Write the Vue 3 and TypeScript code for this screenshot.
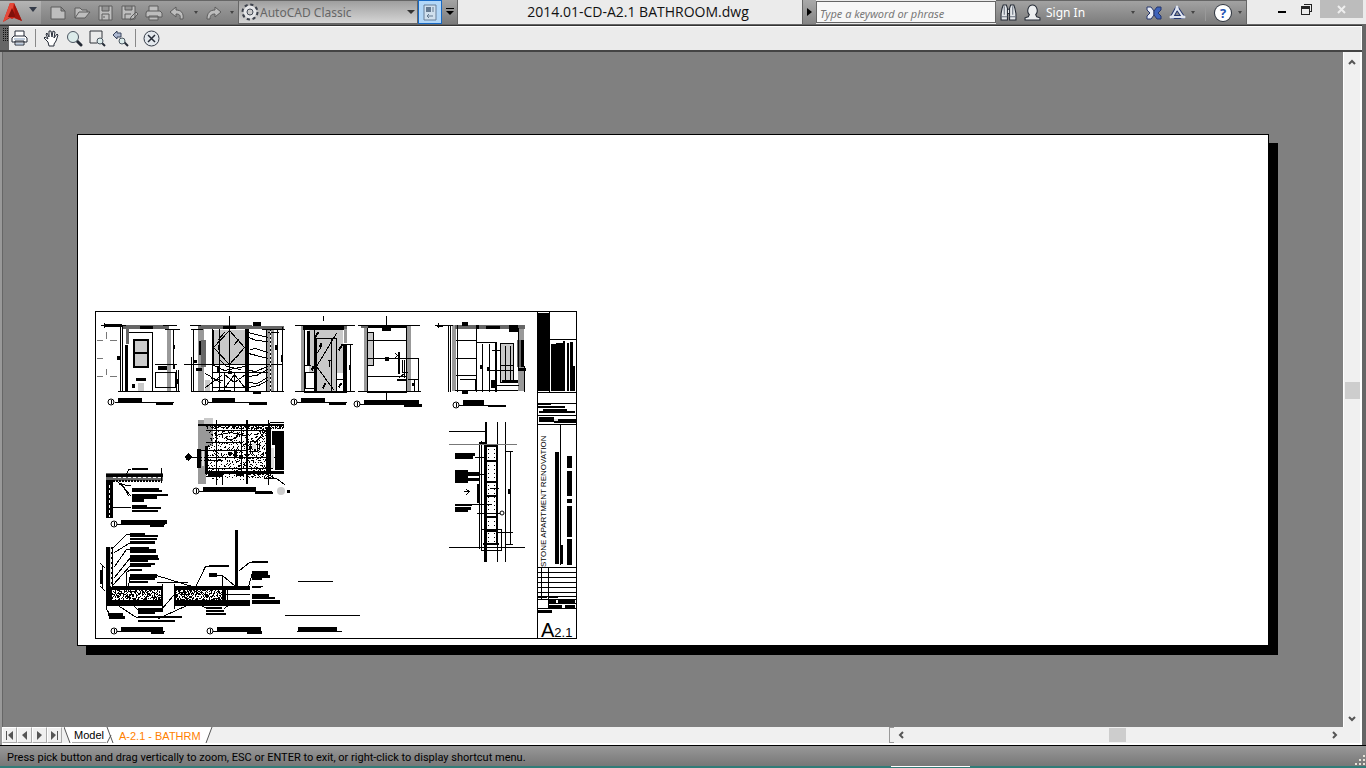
<script setup lang="ts">
import { ref } from 'vue'

type Box = [number, number, number, number]

const workspace = ref('AutoCAD Classic')
const query = ref('')
const activeTab = ref('A-2.1 - BATHRM')

const boxes = (list: Box[]): string =>
  list.map(([x1, y1, x2, y2]) => `M${x1} ${y1}H${x2}V${y2}H${x1}Z`).join('')

const speckle = (x1: number, y1: number, x2: number, y2: number, density: number, seed: number): string => {
  let state = seed
  let d = ''
  for (let y = y1; y < y2; y++) {
    for (let x = x1; x < x2; x++) {
      state = (state * 1103515245 + 12345) % 2147483648
      if (state / 2147483648 < density) d += `M${x} ${y}h1v1h-1z`
    }
  }
  return d
}

const darkGray = boxes([
  [122, 325, 169, 329], [126, 329, 129, 344], [198, 325, 252, 329], [252, 326, 284, 329],
  [201, 340, 206, 367], [303, 325, 347, 329], [361, 326, 368, 328], [455, 325, 525, 329],
  [517, 340, 522, 367], [106, 473, 163, 481],
])
const midGray = boxes([
  [167, 329, 171, 391], [198, 329, 204, 391], [267, 329, 274, 391], [301, 326, 304, 391],
  [344, 326, 347, 343], [364, 326, 367, 391], [407, 326, 411, 391], [452, 325, 456, 391],
  [518, 329, 524, 391], [198, 420, 206, 484], [204, 424, 213, 446],
])
const lightGray = boxes([
  [213, 330, 245, 364], [309, 330, 343, 373], [316, 338, 336, 391], [368, 332, 373, 365],
  [501, 344, 513, 382], [204, 418, 213, 424], [138, 383, 144, 391], [205, 380, 210, 391],
])

const solids = boxes([
  [125, 345, 128, 391], [140, 326, 153, 329], [117, 356, 120, 360], [173, 345, 175, 349], [173, 365, 175, 369],
  [158, 366, 167, 370], [132, 384, 135, 388], [136, 378, 146, 381], [177, 379, 179, 384],
  [104, 324, 122, 327],
  [223, 326, 236, 329], [253, 322, 261, 326], [253, 391, 261, 394], [245, 329, 248, 391], [196, 368, 202, 371],
  [194, 360, 197, 363], [199, 341, 201, 355], [218, 345, 220, 350], [217, 366, 220, 372], [275, 345, 277, 350], [281, 355, 283, 362],
  [218, 390, 231, 392], [228, 371, 232, 374],
  [303, 326, 344, 330], [307, 331, 310, 366], [343, 344, 347, 391], [349, 365, 351, 370],
  [368, 326, 407, 328], [382, 328, 391, 331], [398, 352, 400, 374], [397, 379, 406, 381], [385, 357, 389, 361],
  [367, 391, 407, 393], [304, 391, 347, 393], [412, 383, 414, 386],
  [437, 325, 443, 327], [462, 322, 468, 326], [462, 391, 468, 394], [486, 326, 500, 329], [509, 325, 518, 332], [476, 325, 479, 329],
  [480, 365, 483, 369], [487, 367, 490, 371], [491, 380, 495, 388], [519, 368, 526, 371], [521, 340, 524, 367], [502, 380, 518, 383],
  [118, 398, 142, 402], [156, 403, 173, 405], [212, 398, 235, 402], [249, 403, 267, 405],
  [301, 398, 325, 402], [329, 403, 346, 405], [364, 400, 419, 404], [404, 404, 422, 407], [463, 400, 484, 405], [488, 405, 506, 407],
  [203, 487, 256, 491], [255, 492, 273, 494], [287, 490, 290, 493], [121, 520, 167, 524], [150, 525, 164, 527],
  [121, 627, 163, 631], [151, 632, 164, 634], [217, 627, 261, 631], [247, 632, 262, 634], [298, 627, 337, 631],
  [106, 474, 163, 477], [106, 480, 113, 518],
  [132, 488, 159, 490], [132, 490, 162, 492], [132, 494, 168, 496], [132, 496, 157, 499], [132, 499, 144, 502],
  [132, 505, 147, 508], [132, 507, 161, 509], [132, 510, 158, 512], [132, 468, 148, 470],
  [106, 547, 110, 606], [111, 547, 113, 588], [106, 586, 162, 589], [106, 601, 162, 606],
  [174, 586, 250, 590], [174, 601, 250, 606], [223, 588, 226, 602], [235, 530, 238, 588],
  [130, 533, 145, 536], [130, 535, 158, 537], [130, 538, 157, 540], [130, 541, 155, 544], [130, 547, 149, 550], [130, 549, 156, 553],
  [130, 555, 158, 558], [130, 558, 159, 560], [130, 560, 148, 562], [130, 563, 155, 565], [130, 565, 151, 567], [130, 569, 142, 571],
  [130, 574, 157, 578], [130, 578, 155, 580], [130, 581, 148, 583],
  [108, 613, 123, 616], [109, 616, 125, 619], [138, 608, 163, 612], [138, 616, 182, 618], [138, 620, 175, 622], [138, 612, 155, 614],
  [209, 565, 229, 567], [209, 573, 217, 577], [206, 607, 222, 609], [206, 610, 224, 612], [206, 613, 226, 615],
  [252, 561, 268, 563], [252, 571, 268, 576], [252, 575, 270, 578], [252, 578, 262, 580], [252, 586, 261, 588], [252, 594, 269, 597],
  [252, 597, 275, 599], [252, 600, 280, 604], [100, 570, 102, 584],
  [484, 445, 487, 562], [496, 445, 498, 545], [484, 445, 498, 447], [484, 460, 498, 462], [484, 481, 498, 483], [484, 495, 498, 497],
  [484, 516, 498, 518], [484, 530, 498, 532], [483, 543, 499, 545], [485, 422, 487, 446], [479, 442, 485, 445],
  [455, 453, 475, 456], [455, 456, 473, 459], [455, 470, 468, 483], [467, 472, 480, 476], [467, 478, 480, 481],
  [455, 504, 472, 506], [455, 507, 471, 510], [455, 510, 468, 512], [477, 484, 480, 503], [508, 489, 511, 494],
  [538, 313, 549, 391], [551, 344, 556, 391], [556, 343, 563, 391], [563, 341, 565, 391], [567, 343, 569, 391], [570, 342, 573, 391], [573, 366, 575, 391],
  [538, 404, 551, 405], [538, 406, 565, 408], [539, 411, 575, 413], [543, 409, 567, 411], [539, 417, 554, 422], [554, 419, 576, 423],
  [555, 452, 559, 564], [560, 545, 563, 564], [567, 456, 572, 468], [567, 471, 572, 496], [567, 499, 572, 503], [567, 506, 572, 537], [567, 539, 572, 565],
  [538, 596, 547, 598], [549, 596, 558, 598], [549, 600, 556, 603], [558, 599, 575, 603], [549, 605, 562, 608], [565, 605, 575, 608], [538, 610, 552, 613],
  [198, 424, 284, 426], [246, 420, 248, 484], [267, 427, 271, 472], [272, 431, 284, 445], [275, 445, 284, 470], [206, 471, 284, 474],
  [197, 449, 201, 468], [205, 446, 208, 474], [186, 456, 190, 460], [236, 472, 244, 476], [208, 474, 222, 477],
  [228, 452, 231, 455], [234, 451, 237, 457], [239, 455, 243, 459],
])

const thinLines = [
  // bathroom elevation with window
  'M101 325H125M104 323V327M120 325V391M122 325V391M178 370V391M173 329V363M152 332V391M129 332H152M118 391H179M165 329H179M163 325H176M155 372H175V387H155ZM155 364H176M115 402H173M176 370V391M164 387H176',
  // vanity elevation
  'M229 316V372M190 325H200M191 329H202M191 391H283M184 364H282M193 329V391M191 357V391M212 329V391M219 329V391M224 372V391M234 372V391M245 374L234 382L224 374M224 388L234 374L245 388M212 372H267M212 387H245M248 329V391M266 329V391M277 329V391M282 327V391M270 329V391M262 329H284M268 332H278M268 364H281M248 332L267 337M248 337L256 340L267 341M250 349L255 348L267 352M248 353L256 355L267 358M249 370L255 371L267 366M248 376L256 375L267 369M248 382L257 383L267 377M248 387L258 385L267 380M220 360L226 366L240 369M213 365L224 370L244 366M205 373L220 382M205 387L221 375M211 378L222 380M207 402H266',
  // shower door
  'M323 316V320M295 325H354M295 391H354M304 326V391M314 330V391M305 365H310M305 372H315V388H305ZM316 338H336V391H316ZM331 338V391M316 366L336 333M316 366L333 389M336 379H343M350 344V391M346 344H352M329 360V366M328 360H331M315 355L321 346M296 402H346',
  'M386 316V325M386 393V400M358 325H419M358 391H420M367 328V391M406 328V391M368 340H406M368 358H417M368 376H406M368 332H373V365H368M418 358V391M414 379V391M402 360V372H407M404 360V377M399 377L405 372M408 379H417M378 358H392M395 353L397 355L395 357M358 404H419',
  // linen elevation
  'M435 325H452M438 323V327M448 325V391M450 325V391M457 325V391M456 340H476M456 358H476M456 375H476M476 328V391M477 342H496V391M482 344V391M489 344V391M495 342V391M490 370H512M492 350H500M500 343H513V382H500ZM505 346V380M510 346V380M501 365H513M460 379H475V389M455 390H517M495 385H518M518 328V370M524 366V391M457 405H505',
  // floor plan
  'M187 457H283M216 420V484M241 424V474M200 450H246M206 468H272M206 476H222M222 472V484M266 427V474M270 422H283M284 484L276 478H264M198 460H222M247 450L266 430M250 441H257V451H250ZM215 435L230 432L244 435M225 437C229 441 235 439 238 434M269 423L266 474M268 420V484M196 491H271M206 430H266M206 442H242',
  // wall and threshold details
  'M161 468V482M124 487L118 482M130 469H128L125 476M130 485L119 484M130 495L120 483M130 507H113M121 483L128 495M117 524H164M162 584V608M174 584V608M130 534H126L112 548M130 542L114 552M130 549H126L114 566M130 557L114 577M130 565L113 584M130 569L126 572V585M130 574L128 586M156 575L195 587M157 582H187M138 610L128 600M138 617H136L116 604M158 618L191 603M109 613L106 609V602M161 609L173 595M209 566H205L195 587M217 575H222V586M222 575L235 586M252 562H249L239 570M252 572L248 586M226 594H249M226 600H249M227 590V601H249M206 608L196 602M224 608L231 602M102 565V588M100 563L104 567M100 586L104 590M115 631H164M211 631H261M298 581H332M285 615H359M297 631H341M252 586H262',
  // shower niche section
  'M449 431H485M449 547H524M479 443V548M481 441V545M497 422V561M505 422V561M510 451V544M506 451H512M506 544H512M496 532H512M475 457H484M475 474H484M455 504H491M477 513H501M490 488H498M481 529H501V550H481ZM464 491H468M466 489L469 491L466 494',
  // title block
  'M95 311H576V638H95ZM537 311V638M549 312V391M549 339H576M537 392H576M537 403H576M537 415H576M537 424H576M560 424V564M537 567H576M537 572H576M537 577H576M537 582H576M537 587H576M537 592H576M537 596H576M537 599H576M549 603H576M537 608H576M541 568V598M548 568V608',
].join('')

const glassLines = 'M229 330L244 347L229 364L213 347ZM213 330V364M218 339L224 332M236 357L241 350M234 344L238 339'
const faintLines = 'M449 444H516M97 340H102M110 340H116M106 332V338M97 358H102M97 376H102M110 376H116M106 369V374'

const noise =
  speckle(208, 430, 246, 471, 0.2, 17) +
  speckle(248, 427, 268, 471, 0.28, 71) +
  speckle(206, 474, 246, 480, 0.1, 39) +
  speckle(246, 474, 274, 478, 0.45, 23) +
  speckle(206, 426, 284, 429, 0.5, 43)

const aggregate = speckle(112, 590, 161, 600, 0.5, 53) + speckle(176, 590, 222, 600, 0.5, 91)

const bubbles: [number, number][] = [
  [111, 402], [205, 402], [294, 402], [357, 404], [456, 405], [196, 491], [114, 524], [114, 631], [210, 631],
]
</script>

<template>
  <div class="app">
    <header class="titlebar">
      <button class="app-menu" aria-label="Application menu">
        <svg width="20" height="20" viewBox="0 0 20 20"><path d="M8 0H12L20 18L12 15L10 16L8 15L1 19Z" fill="#c62114" /><path d="M8 0H12L10 9L8 14L1 19Z" fill="#e5493a" /><path d="M10 5L14 14H6Z" fill="#81110b" /><path d="M12 0L20 18L13 15Z" fill="#9b150d" /></svg>
        <svg width="8" height="5" viewBox="0 0 8 5"><path d="M0 0H8L4 5Z" fill="#343b49" /></svg>
      </button>
      <nav class="quick" aria-label="Quick access">
        <button aria-label="New"><svg width="18" height="16" viewBox="0 0 18 16"><path d="M2 2H12L16 6V14H2ZM12 2V6H16" /></svg></button>
        <button aria-label="Open"><svg width="18" height="16" viewBox="0 0 18 16"><path d="M2 13V3H7L9 5H14V7M2 13L6 7H17L12 13Z" /></svg></button>
        <button aria-label="Save"><svg width="18" height="16" viewBox="0 0 18 16"><path d="M2 1H15V15H2ZM5 1V6H12V1M5 15V9H12V15M7 11V13" /></svg></button>
        <button aria-label="Save as"><svg width="18" height="16" viewBox="0 0 18 16"><path d="M1 1H14V14H1ZM4 1V5H11V1M4 14V9H10M9 15L10 12L15 7L17 9L12 14Z" /></svg></button>
        <button aria-label="Plot"><svg width="18" height="16" viewBox="0 0 18 16"><path d="M4 6V1H13V6M2 6H15L17 8V12H1V8ZM4 11H13V15H4Z" /></svg></button>
        <button aria-label="Undo"><svg width="18" height="16" viewBox="0 0 18 16"><path d="M1 7L7 2V5C12 5 15 8 14 14H11C12 10 10 9 7 9V12Z" /></svg></button>
        <i class="caret"></i>
        <button aria-label="Redo"><svg width="18" height="16" viewBox="0 0 18 16"><path d="M16 7L10 2V5C5 5 2 8 2 14H5C5 10 7 9 10 9V12Z" /></svg></button>
        <i class="caret"></i>
      </nav>
      <label class="workspace">
        <svg width="18" height="18" viewBox="0 0 18 18"><circle cx="9" cy="9" r="7" fill="none" stroke="#3c414b" stroke-width="3" stroke-dasharray="3 2.5" /><circle cx="9" cy="9" r="6.5" fill="#e5e6e8" /><circle cx="9" cy="9" r="3" fill="#ccc" stroke="#454b56" /></svg>
        <select v-model="workspace" aria-label="Workspace"><option>AutoCAD Classic</option></select>
        <i class="caret big"></i>
      </label>
      <button class="toggle" aria-label="Quick properties"><svg width="14" height="17" viewBox="0 0 14 17"><path d="M1 1H13V16H1Z" fill="#d0e0ee" stroke="#667e99" /><path d="M3 3H8V8H3Z" fill="#657a91" /><path d="M10 3V8M4 12H10M4 12L6 10M4 12L6 14" fill="none" stroke="#657a91" /></svg></button>
      <button class="customize" aria-label="Customize toolbar"><svg width="8" height="8" viewBox="0 0 8 8"><path d="M0 0H8V1H0ZM0 3H8L4 7Z" fill="#000" /></svg></button>
      <h1>2014.01-CD-A2.1 BATHROOM.dwg</h1>
      <button class="expand" aria-label="Collapse search"><svg width="5" height="8" viewBox="0 0 5 8"><path d="M0 0L5 4L0 8Z" /></svg></button>
      <input v-model="query" class="search" type="text" placeholder="Type a keyword or phrase" aria-label="Search" />
      <div class="info">
        <button aria-label="Find"><svg width="17" height="17" viewBox="0 0 16 16"><path d="M3 1H6L7 4V15H1V9L2 4ZM10 1H13L14 4L15 9V15H9V4ZM7 5H9V9H7Z" fill="#e4e7eb" stroke="#252b36" /><path d="M1 12H7M9 12H15M4 2V10M12 2V10" stroke="#68707d" /></svg></button>
        <button class="sign">
          <svg width="17" height="17" viewBox="0 0 16 16"><path d="M5 10C2 7 4 1 8 1S14 7 11 10L12 12L15 13V15H1V13L4 12Z" fill="#eceef0" stroke="#252b36" /></svg>
          <span>Sign In</span><i class="caret"></i>
        </button>
        <button aria-label="Exchange apps"><svg width="16" height="14" viewBox="0 0 16 14"><path d="M1 1H5L8 5V9L5 13H1V10L4 7L1 4Z" fill="#e7ebf5" stroke="#27366c" /><path d="M15 1H11L8 5V9L11 13H15V10L12 7L15 4Z" fill="#3d62ba" stroke="#27366c" /></svg></button>
        <button class="share" aria-label="Stay connected"><svg width="17" height="15" viewBox="0 0 17 15"><path d="M8 3L3 12H14Z" fill="none" stroke="#26376f" stroke-width="4" stroke-linejoin="round" /><path d="M8 3L3 12H14Z" fill="none" stroke="#e0e5f0" stroke-width="2" stroke-linejoin="round" /><path d="M8 2V4M2 12H4M13 12H15" stroke="#e0e5f0" stroke-width="3" stroke-linecap="round" /></svg><i class="caret"></i></button>
        <i class="divider"></i>
        <button class="help" aria-label="Help"><span>?</span><i class="caret"></i></button>
      </div>
      <div class="window-buttons">
        <button aria-label="Minimize"><svg width="10" height="10" viewBox="0 0 10 10"><path d="M1 7H9V9H1Z" /></svg></button>
        <button aria-label="Restore"><svg width="11" height="11" viewBox="0 0 11 11" shape-rendering="crispEdges"><path d="M3 0H11V8H9V7H10V1H3ZM0 2H9V11H0ZM1 5V10H8V5Z" fill="#222" fill-rule="evenodd" /></svg></button>
        <button class="close" aria-label="Close"><svg width="9" height="9" viewBox="0 0 9 9"><path d="M1 1L8 8M8 1L1 8" stroke="#eee" stroke-width="2" /></svg></button>
      </div>
    </header>

    <div class="toolbar" role="toolbar" aria-label="Plot preview">
      <i class="grip"></i>
      <div class="tools">
        <button aria-label="Plot"><svg width="18" height="16" viewBox="0 0 18 16"><path d="M4 6V1H13V6M3 6H14L16 8V12H1V8ZM4 11H13V15H4Z" fill="#fff" stroke="#252b36" stroke-linejoin="round" /><path d="M3 9H14M5 14H12" stroke="#839dbc" /></svg></button>
        <i class="rule"></i>
        <button aria-label="Pan"><svg width="17" height="17" viewBox="0 0 17 17"><path d="M6 16L5 12L1 8L2 7L5 9L3 4L4 3L6 7L6 1H8L9 7L10 1L12 2L11 8L14 4L15 5L13 11L11 14V16Z" fill="#fff" stroke="#252b36" /></svg></button>
        <button aria-label="Zoom"><svg width="17" height="17" viewBox="0 0 17 17"><path d="M11 11L15 15" stroke="#252b36" stroke-width="3" stroke-linecap="round" /><circle cx="7" cy="7" r="5.5" fill="#dceceb" stroke="#4b5560" /></svg></button>
        <button aria-label="Zoom window"><svg width="17" height="17" viewBox="0 0 17 17"><path d="M8 13H1V1H13V8" fill="none" stroke="#30343a" /><path d="M12 12L16 16" stroke="#252b36" stroke-width="2" /><circle cx="11" cy="11" r="3" fill="#dceceb" stroke="#4b5560" /></svg></button>
        <button aria-label="Zoom previous"><svg width="17" height="17" viewBox="0 0 17 17"><path d="M1 5L5 1V3H9V7H5V9Z" fill="#adb8d0" stroke="#39445c" /><path d="M12 12L16 16" stroke="#252b36" stroke-width="2" /><circle cx="10" cy="11" r="3" fill="#dceceb" stroke="#4b5560" /></svg></button>
        <i class="rule"></i>
        <button aria-label="Close preview"><svg width="17" height="17" viewBox="0 0 17 17"><circle cx="8.5" cy="8.5" r="7.5" fill="#e3e8ed" stroke="#343b47" /><path d="M5 5L12 12M12 5L5 12" stroke="#252b36" stroke-width="1.5" /></svg></button>
      </div>
    </div>

    <main class="workarea">
      <div class="view">
        <div class="canvas">
          <div class="paper">
            <svg class="drawing" width="482" height="328" viewBox="95 311 482 328" role="img" aria-label="Bathroom sheet A2.1">
              <g shape-rendering="crispEdges">
                <path :d="midGray" fill="#999" />
                <path :d="lightGray" fill="#c9c9c9" />
                <path :d="darkGray" fill="#666" />
                <path :d="noise" />
                <path d="M110 589H162V602H110ZM174 589H224V602H174Z" />
                <path d="M110 547H111V588H110ZM108 482H110V518H108Z" fill="#ddd" />
                <path :d="aggregate" fill="#fff" />
                <path :d="solids" />
                <path d="M134 340H148V367H134Z" fill="#ccc" stroke="#000" stroke-width="2" />
                <path d="M134 353H148M316 338V391" stroke="#000" stroke-width="2" fill="none" />
                <g class="pen" transform="translate(.5 .5)" fill="none" stroke="#000">
                  <path :d="thinLines" />
                  <path :d="glassLines" />
                  <path :d="faintLines" stroke="#777" />
                </g>
                <g transform="translate(.5 .5)" fill="none">
                  <path d="M109 484V516M111 548V586M112 477H160" stroke="#fff" stroke-dasharray="3 2" />
                  <path d="M112 480H160" stroke="#000" stroke-width="2" stroke-dasharray="2 1" />
                  <path d="M488 448V543M494 448V543" stroke="#000" stroke-dasharray="1 3" />
                  <path d="M270 330V391" stroke="#fff" stroke-dasharray="2 2" />
                  <path d="M314 337L318 332M338 350L342 344M322 388L325 383M338 387L341 383M311 370L313 366M319 347L321 343" stroke="#000" stroke-width="2" />
                </g>
                <path d="M554 419H558V421H554ZM252 443H256V449H252ZM271 448H274V468H271ZM202 451H204V466H202Z" fill="#ddd" />
                <path d="M184 457L188 453L192 457L188 461Z" />
              </g>
              <circle cx="281" cy="491" r="4" fill="#ccc" />
              <circle cx="502" cy="513" r="2" fill="#fff" stroke="#000" />
              <g v-for="[x, y] in bubbles" :key="`${x}-${y}`">
                <circle :cx="x" :cy="y" r="3" fill="#fff" stroke="#000" />
                <path :d="`M${x} ${y - 2}h1v4h-1z`" />
              </g>
              <text class="project" transform="translate(546 567) rotate(-90)">STONE APARTMENT RENOVATION</text>
              <text class="sheet" x="541" y="637">A<tspan class="sheet-number">2.1</tspan></text>
            </svg>
          </div>
        </div>
        <div class="vscroll">
          <button aria-label="Scroll up"><svg width="8" height="8" viewBox="0 0 8 8"><path d="M1 6L4 3L7 6" /></svg></button>
          <i class="thumb"></i>
          <button aria-label="Scroll down"><svg width="8" height="8" viewBox="0 0 8 8"><path d="M1 2L4 5L7 2" /></svg></button>
        </div>
      </div>
      <div class="tabstrip">
        <div class="tab-nav">
          <button aria-label="First layout"><svg width="9" height="9" viewBox="0 0 9 9"><path d="M1 0H2V9H1ZM8 0V9L3 4Z" /></svg></button>
          <button aria-label="Previous layout"><svg width="9" height="9" viewBox="0 0 9 9"><path d="M7 0V9L2 4Z" /></svg></button>
          <button aria-label="Next layout"><svg width="9" height="9" viewBox="0 0 9 9"><path d="M2 0V9L7 4Z" /></svg></button>
          <button aria-label="Last layout"><svg width="9" height="9" viewBox="0 0 9 9"><path d="M7 0H8V9H7ZM1 0V9L6 4Z" /></svg></button>
        </div>
        <div class="tabs">
          <svg class="slant" width="8" height="16" viewBox="0 0 8 16"><path d="M0 0H8V16H6Z" fill="#fff" /><path d="M0 0L6 16" fill="none" stroke="#555" /></svg>
          <button class="tab" @click="activeTab = 'Model'">Model</button>
          <svg class="slant" width="8" height="16" viewBox="0 0 8 16"><path d="M0 0H8V16H0Z" fill="#fff" /><path d="M1 0L7 16M5 8L1 16" fill="none" stroke="#555" /></svg>
          <button class="tab active" @click="activeTab = 'A-2.1 - BATHRM'">A-2.1 - BATHRM</button>
          <svg class="slant" width="8" height="16" viewBox="0 0 8 16"><path d="M0 0H7L1 16H0Z" fill="#fff" /><path d="M7 0L1 16" fill="none" stroke="#555" /></svg>
        </div>
        <i class="splitter"></i>
        <div class="hscroll">
          <button aria-label="Scroll left"><svg width="8" height="8" viewBox="0 0 8 8"><path d="M6 1L3 4L6 7" /></svg></button>
          <i class="thumb"></i>
          <button aria-label="Scroll right"><svg width="8" height="8" viewBox="0 0 8 8"><path d="M2 1L5 4L2 7" /></svg></button>
        </div>
      </div>
    </main>

    <footer class="status">
      <span>Press pick button and drag vertically to zoom, ESC or ENTER to exit, or right-click to display shortcut menu.</span>
      <svg width="12" height="12" viewBox="0 0 12 12"><path d="M9 1h2v2h-2zM5 5h2v2h-2zM9 5h2v2h-2zM1 9h2v2h-2zM5 9h2v2h-2zM9 9h2v2h-2z" fill="#e5e2d8" /></svg>
    </footer>
    <div class="desktop"><i></i></div>
  </div>
</template>

<style>
body { margin: 0; }
</style>

<style scoped>
.app { height: 100vh; display: flex; flex-direction: column; background: #666; font-family: "Liberation Sans", Arial, sans-serif; overflow: hidden; }
.app * { box-sizing: border-box; }
button { border: 0; padding: 0; margin: 0; background: none; font: inherit; color: inherit; display: flex; align-items: center; justify-content: center; flex: none; }
svg { display: block; flex: none; }

.titlebar { flex: none; height: 25px; display: flex; background: #ebebeb; border-bottom: 1px solid #666; }
.app-menu { width: 41px; gap: 7px; padding-right: 3px; background: linear-gradient(#b5b5b5, #929292); border-top: 1px solid #666; }
.app-menu svg:last-child { margin-bottom: 6px; }
.quick { width: 197px; display: flex; align-items: center; gap: 6px; padding-left: 8px; background: linear-gradient(#9d9d9d, #7f7f7f); border-top: 1px solid #666; }
.quick svg { fill: #bdbdbd; stroke: #5d5d5d; stroke-linejoin: round; }
.caret { flex: none; width: 0; height: 0; border: 2px solid transparent; border-top: 3px solid #444; border-bottom: 0; }
.quick .caret { margin: 0 1px; }
.caret.big { border-width: 4px 4px 0; border-top-color: #333; }
.workspace { width: 180px; display: flex; align-items: center; gap: 1px; padding: 0 2px; background: linear-gradient(#9f9f9f, #d5d5d5); border: 1px solid #666; }
.workspace select { flex: 1; min-width: 0; appearance: none; border: 0; padding: 0; background: none; color: #666; font: 12px "Noto Sans", sans-serif; }
.toggle { width: 24px; background: #b2d7f8; border: 1px solid #1769c5; }
.customize { width: 16px; background: linear-gradient(#a4a4a4, #7b7b7b); border-right: 1px solid #666; }
h1 { flex: 1; margin: 0; padding-left: 16px; font: 14px/24px "Open Sans", "Noto Sans", sans-serif; color: #111; text-align: center; white-space: nowrap; }
.expand { width: 14px; background: linear-gradient(#aaa, #858585); border-left: 1px solid #666; }
.search { width: 180px; margin: 1px 0; border: 1px solid #666; padding: 3px 3px 0; background: #f7f7f7; color: #444; font: italic 11px "Noto Sans", sans-serif; }
.search::placeholder { color: #777; opacity: 1; }
.info { width: 251px; display: flex; align-items: center; padding-left: 4px; background: linear-gradient(#a2a2a2, #7c7c7c); border-top: 1px solid #666; border-right: 1px solid #666; color: #fff; }
.sign { width: 112px; margin: 0 10px 0 7px; justify-content: flex-start; gap: 5px; font: 12px "Noto Sans", sans-serif; }
.sign .caret { margin-left: auto; margin-right: 1px; }
.share { margin-left: 7px; gap: 5px; }
.divider { width: 1px; height: 16px; margin: 0 9px 0 10px; background: #999; }
.help { gap: 7px; }
.help span { width: 16px; height: 16px; border-radius: 50%; background: #fff; box-shadow: 0 0 0 1px #303640; color: #2453b3; font: bold 13px/16px "Open Sans", sans-serif; }
.window-buttons { width: 119px; display: flex; align-items: flex-start; padding: 0 3px 0 23px; }
.window-buttons button { width: 24px; height: 18px; }
.window-buttons button.close { width: 43px; background: #bcbcbc; margin-left: auto; }

.toolbar { flex: none; height: 27px; display: flex; border-top: 1px solid #333; border-bottom: 2px solid #444; margin-right: 4px; }
.grip { flex: none; width: 5px; margin: 2px 1px 8px 3px; background: repeating-linear-gradient(90deg, transparent 0 1px, #666 1px 2px), repeating-linear-gradient(#111 0 1px, #666 1px 2px); }
.tools { flex: 1; display: flex; align-items: center; background: #ebebeb; border-top: 1px solid #fff; padding: 0 0 1px 2px; gap: 6px; border-right: 1px solid #fff; }
.rule { width: 1px; height: 18px; background: #888; margin-right: 1px; }

.workarea { flex: 1; min-height: 0; display: flex; flex-direction: column; margin-right: 4px; border-left: 2px solid #999; border-right: 2px solid #fff; }
.view { flex: 1; min-height: 0; display: flex; }
.canvas { flex: 1; min-width: 0; display: flex; background: #808080; border-left: 1px solid #666; padding: 82px 74px 81px; }
.paper { flex: 1; display: flex; align-items: flex-end; background: #fff; border: 1px solid #000; box-shadow: 9px 9px 0 #000; padding: 0 0 6px 17px; }
.drawing { overflow: visible; }
.pen { stroke-linecap: square; }
.project { font: 8px "Liberation Sans", Arial, sans-serif; }
.sheet { font: 20px "Liberation Sans", Arial, sans-serif; }
.sheet-number { font-size: 13px; }
.vscroll { flex: none; width: 17px; display: flex; flex-direction: column; align-items: center; justify-content: space-between; background: #f0f0f0; border-left: 1px solid #fff; padding-top: 1px; }
.vscroll button { width: 16px; height: 17px; }
.vscroll .thumb { width: 15px; height: 17px; background: #cdcdcd; }
.vscroll path, .hscroll path { fill: none; stroke: #555; stroke-width: 2; }
.tabstrip { flex: none; height: 18px; display: flex; background: #f0f0f0; border-bottom: 2px solid #fff; font: 11px "Liberation Sans", Arial, sans-serif; }
.tab-nav { display: flex; }
.tab-nav button { width: 15px; height: 16px; border: 1px solid #aaa; border-left-color: #fff; border-top-color: #fff; }
.tab-nav path { fill: #555; }
.tabs { flex: 1; display: flex; padding-left: 2px; }
.tab { background: #fff; color: #000; padding: 1px 2px 0; height: 16px; border-bottom: 1px solid #aaa; }
.tab.active { color: #ff7f00; padding: 1px 4px 0 5px; border-bottom: 0; }
.splitter { width: 5px; border: 1px solid #999; border-right: 0; }
.hscroll { width: 33%; display: flex; align-items: center; justify-content: space-between; margin-right: 18px; }
.hscroll button { width: 14px; height: 16px; }
.hscroll .thumb { width: 17px; height: 14px; background: #cdcdcd; }

.status { flex: none; height: 21px; display: flex; align-items: center; justify-content: space-between; padding: 0 0 0 7px; background: linear-gradient(#989898, #777); border-top: 1px solid #000; color: #000; font: 11px Roboto, "Liberation Sans", sans-serif; white-space: nowrap; }
.status span { padding-top: 2px; }
.status svg { align-self: flex-end; }
.desktop { flex: none; height: 2px; background: #317c78; }
.desktop i { display: block; width: 79px; height: 1px; margin: 0 29% 0 auto; background: #fff; }
</style>
